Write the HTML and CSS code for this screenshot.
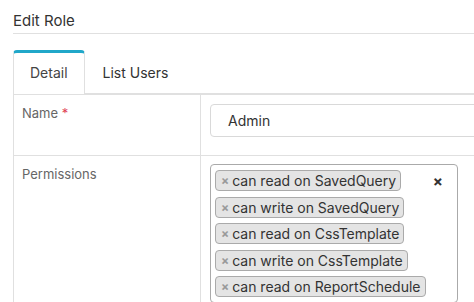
FILE: index.html
```html
<!DOCTYPE html>
<html>
<head>
<meta charset="utf-8">
<link rel="stylesheet" href="styles.css">
</head>
<body>
<div class="page">
  <div class="title">Edit Role</div>
  <div class="tabs">
    <div class="tab active">Detail</div>
    <div class="tab">List Users</div>
  </div>
  <div class="form">
    <div class="label">Name <span class="req">*</span></div>
    <div class="value name-value">
      <div class="input">Admin</div>
    </div>
    <div class="label">Permissions</div>
    <div class="value perm-value">
      <div class="select">
        <div class="tags">
          <span class="tag"><span class="x">×</span>can read on SavedQuery</span>
          <span class="tag"><span class="x">×</span>can write on SavedQuery</span>
          <span class="tag"><span class="x">×</span>can read on CssTemplate</span>
          <span class="tag"><span class="x">×</span>can write on CssTemplate</span>
          <span class="tag"><span class="x">×</span>can read on ReportSchedule</span>
        </div>
        <span class="clear">×</span>
      </div>
    </div>
  </div>
</div>
</body>
</html>
```
FILE: styles.css
```css
html, body {
  margin: 0;
  padding: 0;
  background: #fff;
  font-family: Inter, "Noto Sans", sans-serif;
  color: #333;
  overflow: hidden;
}
.page {
  padding-left: 13px;
  width: 700px;
}
.title {
  padding-top: 11px;
  padding-bottom: 2px;
  font-size: 15px;
  line-height: 20px;
  color: #333;
  border-bottom: 1px solid #e0e0e0;
}
.tabs {
  display: flex;
  margin-top: 16px;
  border-bottom: 1px solid #e0e0e0;
}
.tab {
  font-size: 14px;
  line-height: 20px;
  padding: 10px 16px;
  border: 1px solid transparent;
  border-top: 3px solid transparent;
  border-bottom: 0;
  margin-right: 1px;
  color: #333;
  margin-bottom: -1px;
}
.tab.active {
  border-color: #20a7c9 #e0e0e0 #e0e0e0 #e0e0e0;
  border-radius: 4px 4px 0 0;
  background: #fff;
  color: #444;
  padding-bottom: 11px;
}
.form {
  display: grid;
  grid-template-columns: 187px 1fr;
  border-left: 1px solid #e0e0e0;
  border-top: 1px solid #e0e0e0;
}
.label {
  font-size: 13px;
  line-height: 19.5px;
  color: #666;
  padding: 9px 8px 8px;
  border-right: 1px solid #e0e0e0;
  border-bottom: 1px solid #e0e0e0;
}
.req {
  color: #e04355;
}
.value {
  border-bottom: 1px solid #e0e0e0;
}
.name-value {
  padding: 9px 0 18px 9px;
}
.input {
  height: 31px;
  line-height: 31px;
  border: 1px solid #d9d9d9;
  border-radius: 4px;
  padding-left: 17px;
  font-size: 14px;
  color: #333;
}
.perm-value {
  padding: 8px 0 8px 9px;
}
.select {
  position: relative;
  width: 240px;
  border: 1px solid #aaa;
  border-radius: 4px;
  padding: 5px 2px 5px 4px;
}
.tags {
  display: flex;
  flex-direction: column;
  align-items: flex-start;
  gap: 5.5px;
}
.tag {
  display: inline-flex;
  align-items: center;
  height: 19px;
  border: 1px solid #aaa;
  border-radius: 4px;
  background: #e4e4e4;
  padding: 0 4px 0 5px;
  font-size: 14px;
  line-height: 19px;
  color: #333;
}
.x {
  color: #999;
  font-weight: bold;
  font-size: 12px;
  margin-right: 3px;
}
.clear {
  position: absolute;
  top: 7px;
  right: 14px;
  font-size: 15px;
  font-weight: bold;
  color: #333;
  line-height: 20px;
}
```
